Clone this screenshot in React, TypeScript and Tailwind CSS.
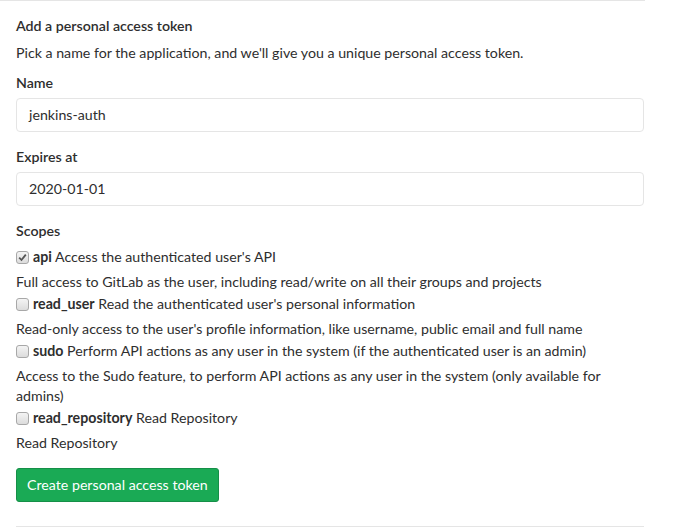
import React from "react";

const scopes = [
  {
    name: "api",
    label: "Access the authenticated user's API",
    help: "Full access to GitLab as the user, including read/write on all their groups and projects",
    checked: true,
  },
  {
    name: "read_user",
    label: "Read the authenticated user's personal information",
    help: "Read-only access to the user's profile information, like username, public email and full name",
    checked: false,
  },
  {
    name: "sudo",
    label: "Perform API actions as any user in the system (if the authenticated user is an admin)",
    help: "Access to the Sudo feature, to perform API actions as any user in the system (only available for admins)",
    checked: false,
  },
  {
    name: "read_repository",
    label: "Read Repository",
    help: "Read Repository",
    checked: false,
  },
];

function Checkbox({ checked }: { checked: boolean }) {
  return (
    <span className="mr-[4px] inline-flex h-[13px] w-[13px] shrink-0 items-center justify-center rounded-[3px] border border-[#a8a8a8] bg-gradient-to-b from-[#f4f4f4] to-[#dcdcdc]">
      {checked && (
        <svg width="9" height="9" viewBox="0 0 9 9">
          <path d="M1.2 4.6 L3.5 7 L7.8 1.6" fill="none" stroke="#555" strokeWidth="1.8" />
        </svg>
      )}
    </span>
  );
}

export default function App() {
  return (
    <div className="h-[530px] w-[683px] bg-white px-4 text-[14.2px] text-[#2e2e2e] [font-family:Lato,sans-serif]">
      <div className="-mx-4 h-px w-[645px] bg-[#e5e5e5]" />

      <h4 className="mt-[15px] font-semibold leading-5">Add a personal access token</h4>
      <p className="mt-[7px] leading-5">
        Pick a name for the application, and we'll give you a unique personal access token.
      </p>

      <label className="mt-[10px] block font-semibold leading-5">Name</label>
      <div className="mt-[5px] flex h-[34px] w-[628px] items-center rounded border border-[#e5e5e5] px-3">
        jenkins-auth
      </div>

      <label className="mt-[15px] block font-semibold leading-5">Expires at</label>
      <div className="mt-[5px] flex h-[34px] w-[628px] items-center rounded border border-[#e5e5e5] px-3">
        2020-01-01
      </div>

      <label className="mt-[15px] block font-semibold leading-5">Scopes</label>
      <div className="w-[628px]">
        {scopes.map((s, i) => (
          <div key={s.name}>
            <div className={`${i === 0 ? "mt-[6px]" : "mt-[2px]"} flex items-center leading-5`}>
              <Checkbox checked={s.checked} />
              <span>
                <b className="font-bold">{s.name}</b> {s.label}
              </span>
            </div>
            <p className="mt-[5px] leading-5">{s.help}</p>
          </div>
        ))}
      </div>

      <button className="mt-[15px] h-[34px] rounded-[3px] border border-[#168f48] bg-[#1aaa55] px-[10px] text-white">
        Create personal access token
      </button>

      <div className="mt-[24px] h-px w-[628px] bg-[#e5e5e5]" />
    </div>
  );
}
